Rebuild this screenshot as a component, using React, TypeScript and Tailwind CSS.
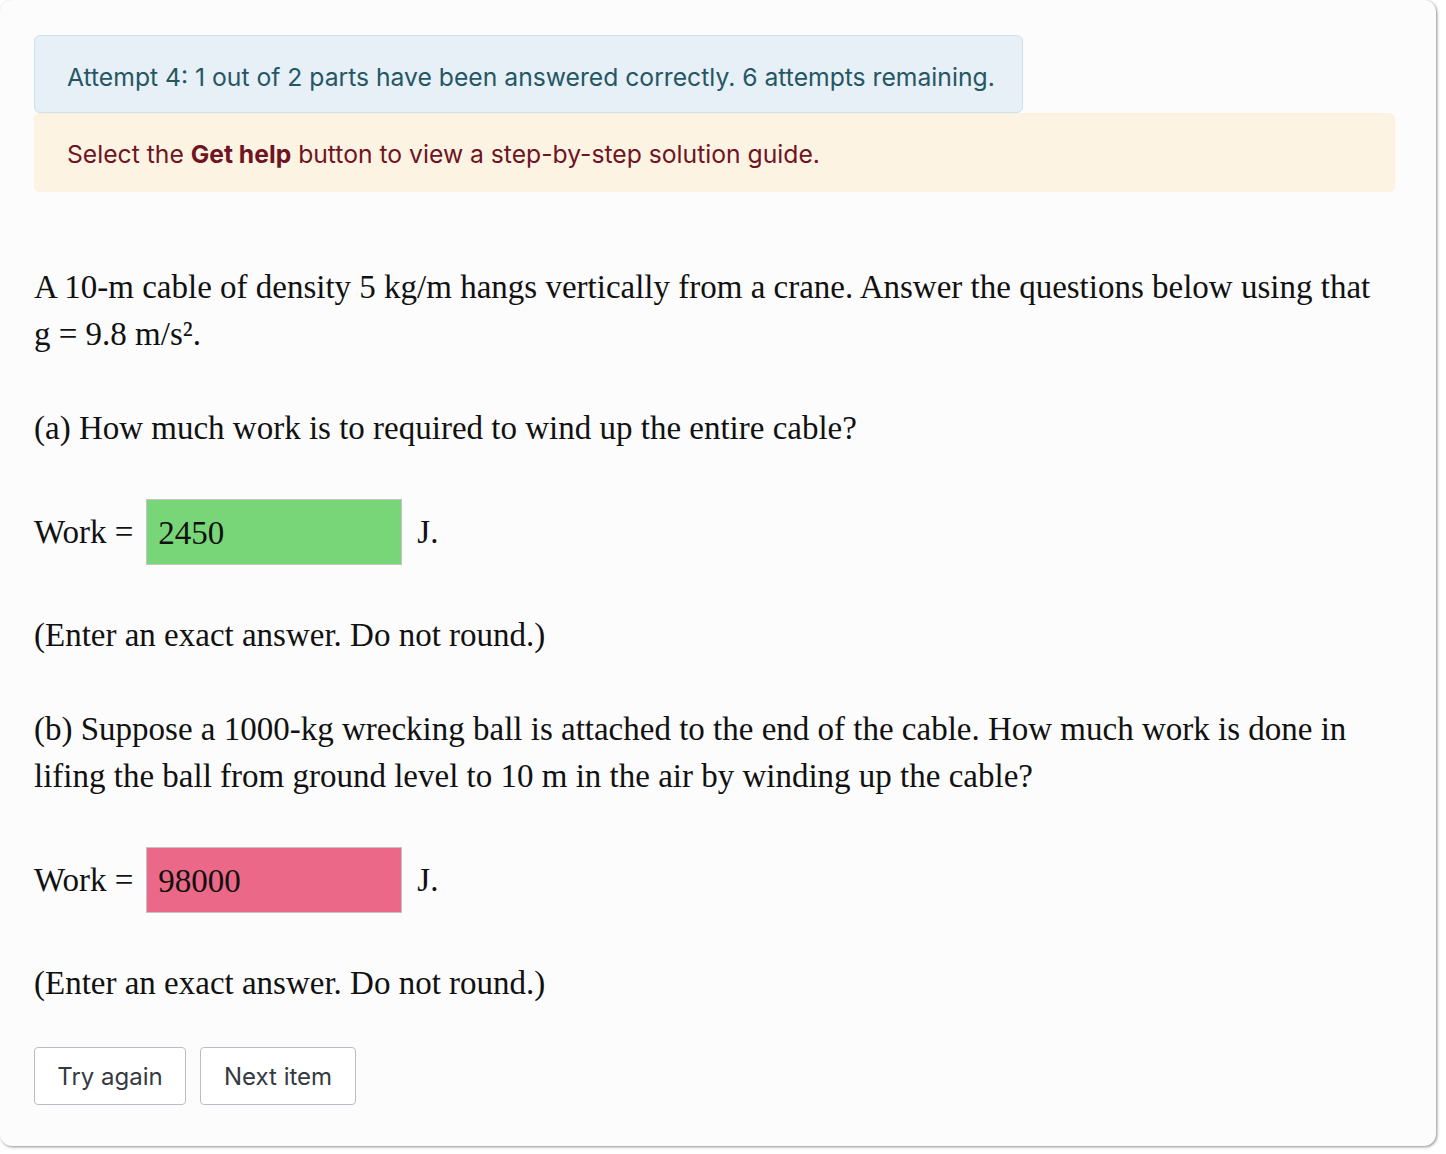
export default function App() {
  const serif = "font-['Liberation_Serif',serif]";
  return (
    <div className="min-h-[1154px] w-[1446px] bg-white">
      <section className="h-[1146px] w-[1436px] rounded-[12px] bg-[#fcfcfc] pl-[34px] pr-[40px] pt-[35px] shadow-[1px_1px_3px_rgba(0,0,0,0.45)]">
        <div className="flex flex-col font-['Inter',sans-serif] text-[24.7px] leading-[30px]">
          <div className="flex h-[78px] w-[989px] items-center whitespace-nowrap rounded-[6px] border border-[#cde3ec] bg-[#e7eff7] px-[32px] pt-[5px] text-[#245763]">
            Attempt 4: 1 out of 2 parts have been answered correctly. 6 attempts remaining.
          </div>
          <div className="flex h-[79px] w-[1361px] items-center rounded-[6px] border border-[#fdf1dd] bg-[#fdf3e2] px-[32px] pt-[3px] text-[#6e1423]">
            <span>
              Select the <strong className="font-bold">Get help</strong> button to view a step-by-step solution guide.
            </span>
          </div>
        </div>

        <div className={`mt-[72px] flex flex-col gap-[47px] ${serif} text-[33px] leading-[47px] text-[#111]`}>
          <p className="w-[1345px]">
            A 10-m cable of density 5 kg/m hangs vertically from a crane. Answer the questions below using that g = 9.8 m/s².
          </p>
          <p>(a) How much work is to required to wind up the entire cable?</p>
          <AnswerRow value="2450" color="bg-[#78d678]" />
          <p>(Enter an exact answer. Do not round.)</p>
          <p className="w-[1345px]">
            (b) Suppose a 1000-kg wrecking ball is attached to the end of the cable. How much work is done in lifing the ball from ground level to 10 m in the air by winding up the cable?
          </p>
          <AnswerRow value="98000" color="bg-[#ec6888]" />
          <p>(Enter an exact answer. Do not round.)</p>
        </div>

        <div className="mt-[40px] flex gap-[14px] font-['Inter',sans-serif] text-[24px] text-[#343a40]">
          <button type="button" className="h-[58px] w-[152px] rounded-[4px] border border-[#b9bec5] bg-white pt-[2px]">
            Try again
          </button>
          <button type="button" className="h-[58px] w-[156px] rounded-[4px] border border-[#b9bec5] bg-white pt-[2px]">
            Next item
          </button>
        </div>
      </section>
    </div>
  );
}

function AnswerRow({ value, color }: { value: string; color: string }) {
  return (
    <div className="flex h-[66px] items-center">
      <span className="mr-[13px]">Work =</span>
      <div className={`flex h-[66px] w-[256px] shrink-0 items-center border border-[#c4c4c4] px-[11px] pt-[2px] ${color}`}>
        {value}
      </div>
      <span className="ml-[15px]">J.</span>
    </div>
  );
}
